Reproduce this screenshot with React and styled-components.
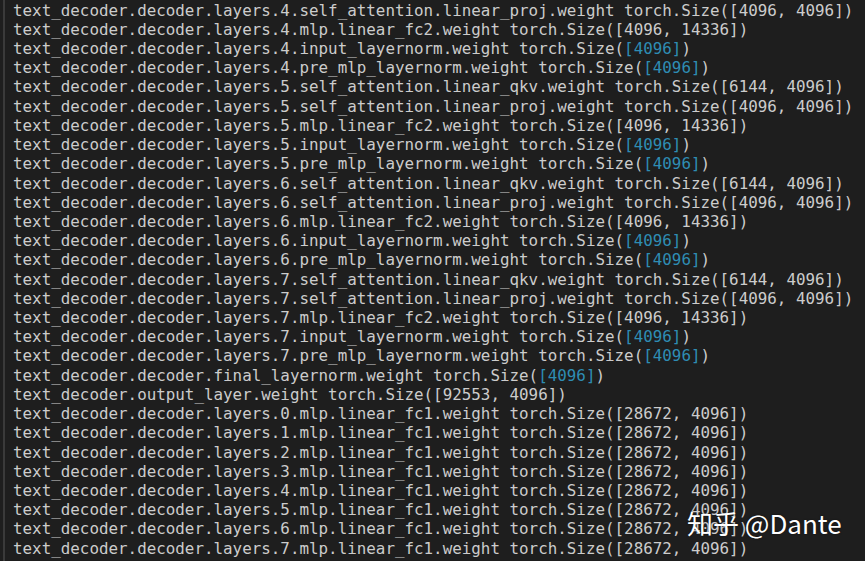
import React from "react";
import styled, { createGlobalStyle } from "styled-components";

const Global = createGlobalStyle`
  html, body { margin: 0; padding: 0; background: #1e1e1e; }
  body { overflow: hidden; width: 865px; height: 561px; }
`;

const Terminal = styled.div`
  position: relative;
  width: 865px;
  height: 561px;
  overflow: hidden;
  background: #1e1e1e;
  display: flex;
`;

const Gutter = styled.div`
  width: 3px;
  flex: 0 0 3px;
`;

const Edge = styled.div`
  width: 2px;
  flex: 0 0 2px;
  background: #3a3a3a;
`;

const Output = styled.div`
  padding-left: 8px;
  margin-top: -18.7px;
  font-family: "DejaVu Sans Mono", monospace;
  font-size: 15.86px;
  line-height: 19.22px;
  color: #cccccc;
  white-space: pre;
`;

const Line = styled.div`
  height: 19.22px;
`;

const Blue = styled.span`
  color: #2e8db3;
`;

const Magenta = styled.span`
  color: #b65cc8;
`;

const Watermark = styled.div`
  position: absolute;
  left: 687px;
  top: 505px;
  font-family: "Noto Sans CJK SC", "Noto Sans", sans-serif;
  font-size: 26px;
  line-height: 36px;
  color: #ffffff;
  text-shadow: 0 0 2px rgba(0,0,0,0.5);
`;

const P = "text_decoder.decoder.layers.";

const rows = [];
const layerRows = (n) => [
  { t: `${P}${n}.self_attention.linear_qkv.weight torch.Size([6144, 4096])` },
  { t: `${P}${n}.self_attention.linear_proj.weight torch.Size([4096, 4096])` },
  { t: `${P}${n}.mlp.linear_fc2.weight torch.Size([4096, 14336])` },
  { t: `${P}${n}.input_layernorm.weight torch.Size(`, b: "[4096]", e: ")" },
  { t: `${P}${n}.pre_mlp_layernorm.weight torch.Size(`, b: "[4096]", e: ")" },
];
[4, 5, 6, 7].forEach((n) => rows.push(...layerRows(n)));
rows.push({ t: "text_decoder.decoder.final_layernorm.weight torch.Size(", b: "[4096]", e: ")" });
rows.push({ t: "text_decoder.output_layer.weight torch.Size([92553, 4096])" });
for (let i = 0; i < 8; i++) {
  rows.push({ t: `${P}${i}.mlp.linear_fc1.weight torch.Size([28672, 4096])` });
}

export default function App() {
  return (
    <>
      <Global />
      <Terminal>
        <Gutter />
        <Edge />
        <Output>
          {rows.map((r, i) => (
            <Line key={i}>
              {r.t}
              {r.b && <Blue>{r.b}</Blue>}
              {r.e}
            </Line>
          ))}
          <Line>
            (pytorch) <Magenta>root@llama</Magenta>:/workspace/Megatron-LM# python
          </Line>
        </Output>
        <Watermark>知乎 @Dante</Watermark>
      </Terminal>
    </>
  );
}
